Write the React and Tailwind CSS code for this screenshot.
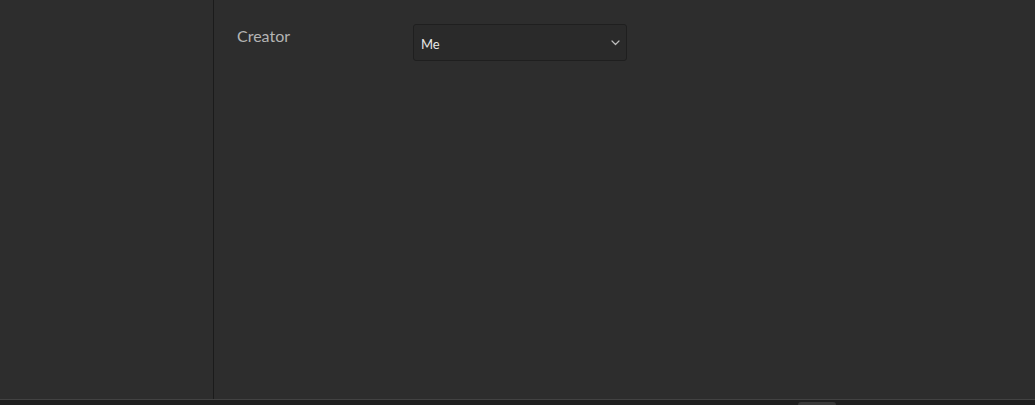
import React from "react";

function App() {
    return (
        <div className="w-[1035px] h-[405px] flex flex-col bg-[#2d2d2d] overflow-hidden" style={{ fontFamily: "'Source Sans Pro', Lato, 'Noto Sans', sans-serif" }}>
            <div className="flex flex-1 min-h-0">
                {/* Sidebar */}
                <aside className="w-[214px] shrink-0 border-r border-[#1b1b1b] bg-[#2d2d2d]" />

                {/* Main */}
                <main className="flex-1 pl-[23px] pt-[24px]">
                    <div className="flex items-start">
                        <label className="w-[176px] pt-[1px] text-[16px] leading-[22px] text-[#b4b4b4]">Creator</label>
                        <button
                            type="button"
                            className="flex items-center justify-between w-[214px] h-[37px] pl-[7px] pr-[6px] rounded-[3px] border border-[#1f1f1f] bg-[#2a2a2a] text-[13px] text-[#e8e8e8]"
                        >
                            <span className="pt-[5px]">Me</span>
                            <svg className="w-[9px] h-[6px]" viewBox="0 0 9 6" fill="none">
                                <path d="M1 1l3.5 3.5L8 1" stroke="#bdbdbd" strokeWidth="1.2" strokeLinecap="round" strokeLinejoin="round" />
                            </svg>
                        </button>
                    </div>
                </main>
            </div>

            {/* Bottom bar */}
            <div className="h-[6px] shrink-0 border-t border-[#424242] bg-[#1e1e1e] relative">
                <div className="absolute left-[798px] top-[2px] w-[38px] h-[4px] rounded-t-[3px] bg-[#383838]" />
            </div>
        </div>
    );
}

export default App;
